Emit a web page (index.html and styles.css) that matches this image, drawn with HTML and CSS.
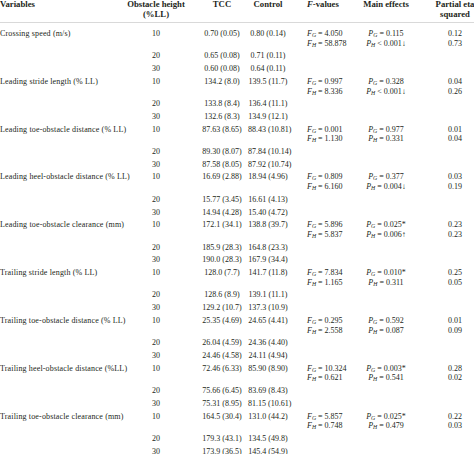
FILE: index.html
```html
<!DOCTYPE html>
<html lang="en">
<head>
<meta charset="utf-8">
<title>Table</title>
<link rel="stylesheet" href="styles.css">
</head>
<body>
<table class="data">
<colgroup>
<col class="c-var"><col class="c-obs"><col class="c-tcc"><col class="c-ctl"><col class="c-f"><col class="c-main"><col class="c-eta">
</colgroup>
<thead>
<tr>
<th class="var">Variables</th>
<th class="obs">Obstacle height<br>(%LL)</th>
<th class="tcc">TCC</th>
<th class="ctl">Control</th>
<th class="fv"><i>F</i>-values</th>
<th class="main">Main effects</th>
<th class="eta">Partial eta<br>squared</th>
</tr>
</thead>
<tbody>
<tr class="first"><td class="var">Crossing speed (m/s)</td><td class="obs">10</td><td class="tcc">0.70 (0.05)</td><td class="ctl">0.80 (0.14)</td><td class="fv"><i>F<sub>G</sub></i> = 4.050<br><i>F<sub>H</sub></i> = 58.878</td><td class="main"><i>P<sub>G</sub></i> = 0.115<br><i>P<sub>H</sub></i> &lt; 0.001↓</td><td class="eta">0.12<br>0.73</td></tr>
<tr><td class="var"></td><td class="obs">20</td><td class="tcc">0.65 (0.08)</td><td class="ctl">0.71 (0.11)</td><td></td><td></td><td></td></tr>
<tr><td class="var"></td><td class="obs">30</td><td class="tcc">0.60 (0.08)</td><td class="ctl">0.64 (0.11)</td><td></td><td></td><td></td></tr>

<tr><td class="var">Leading stride length (% LL)</td><td class="obs">10</td><td class="tcc">134.2 (8.0)</td><td class="ctl">139.5 (11.7)</td><td class="fv"><i>F<sub>G</sub></i> = 0.997<br><i>F<sub>H</sub></i> = 8.336</td><td class="main"><i>P<sub>G</sub></i> = 0.328<br><i>P<sub>H</sub></i> &lt; 0.001↓</td><td class="eta">0.04<br>0.26</td></tr>
<tr><td class="var"></td><td class="obs">20</td><td class="tcc">133.8 (8.4)</td><td class="ctl">136.4 (11.1)</td><td></td><td></td><td></td></tr>
<tr><td class="var"></td><td class="obs">30</td><td class="tcc">132.6 (8.3)</td><td class="ctl">134.9 (12.1)</td><td></td><td></td><td></td></tr>

<tr><td class="var">Leading toe-obstacle distance (% LL)</td><td class="obs">10</td><td class="tcc">87.63 (8.65)</td><td class="ctl">88.43 (10.81)</td><td class="fv"><i>F<sub>G</sub></i> = 0.001<br><i>F<sub>H</sub></i> = 1.130</td><td class="main"><i>P<sub>G</sub></i> = 0.977<br><i>P<sub>H</sub></i> = 0.331</td><td class="eta">0.01<br>0.04</td></tr>
<tr><td class="var"></td><td class="obs">20</td><td class="tcc">89.30 (8.07)</td><td class="ctl">87.84 (10.14)</td><td></td><td></td><td></td></tr>
<tr><td class="var"></td><td class="obs">30</td><td class="tcc">87.58 (8.05)</td><td class="ctl">87.92 (10.74)</td><td></td><td></td><td></td></tr>

<tr><td class="var">Leading heel-obstacle distance (% LL)</td><td class="obs">10</td><td class="tcc">16.69 (2.88)</td><td class="ctl">18.94 (4.96)</td><td class="fv"><i>F<sub>G</sub></i> = 0.809<br><i>F<sub>H</sub></i> = 6.160</td><td class="main"><i>P<sub>G</sub></i> = 0.377<br><i>P<sub>H</sub></i> = 0.004↓</td><td class="eta">0.03<br>0.19</td></tr>
<tr><td class="var"></td><td class="obs">20</td><td class="tcc">15.77 (3.45)</td><td class="ctl">16.61 (4.13)</td><td></td><td></td><td></td></tr>
<tr><td class="var"></td><td class="obs">30</td><td class="tcc">14.94 (4.28)</td><td class="ctl">15.40 (4.72)</td><td></td><td></td><td></td></tr>

<tr><td class="var">Leading toe-obstacle clearance (mm)</td><td class="obs">10</td><td class="tcc">172.1 (34.1)</td><td class="ctl">138.8 (39.7)</td><td class="fv"><i>F<sub>G</sub></i> = 5.896<br><i>F<sub>H</sub></i> = 5.837</td><td class="main"><i>P<sub>G</sub></i> = 0.025*<br><i>P<sub>H</sub></i> = 0.006↑</td><td class="eta">0.23<br>0.23</td></tr>
<tr><td class="var"></td><td class="obs">20</td><td class="tcc">185.9 (28.3)</td><td class="ctl">164.8 (23.3)</td><td></td><td></td><td></td></tr>
<tr><td class="var"></td><td class="obs">30</td><td class="tcc">190.0 (28.3)</td><td class="ctl">167.9 (34.4)</td><td></td><td></td><td></td></tr>

<tr><td class="var">Trailing stride length (% LL)</td><td class="obs">10</td><td class="tcc">128.0 (7.7)</td><td class="ctl">141.7 (11.8)</td><td class="fv"><i>F<sub>G</sub></i> = 7.834<br><i>F<sub>H</sub></i> = 1.165</td><td class="main"><i>P<sub>G</sub></i> = 0.010*<br><i>P<sub>H</sub></i> = 0.311</td><td class="eta">0.25<br>0.05</td></tr>
<tr><td class="var"></td><td class="obs">20</td><td class="tcc">128.6 (8.9)</td><td class="ctl">139.1 (11.1)</td><td></td><td></td><td></td></tr>
<tr><td class="var"></td><td class="obs">30</td><td class="tcc">129.2 (10.7)</td><td class="ctl">137.3 (10.9)</td><td></td><td></td><td></td></tr>

<tr><td class="var">Trailing toe-obstacle distance (% LL)</td><td class="obs">10</td><td class="tcc">25.35 (4.69)</td><td class="ctl">24.65 (4.41)</td><td class="fv"><i>F<sub>G</sub></i> = 0.295<br><i>F<sub>H</sub></i> = 2.558</td><td class="main"><i>P<sub>G</sub></i> = 0.592<br><i>P<sub>H</sub></i> = 0.087</td><td class="eta">0.01<br>0.09</td></tr>
<tr><td class="var"></td><td class="obs">20</td><td class="tcc">26.04 (4.59)</td><td class="ctl">24.36 (4.40)</td><td></td><td></td><td></td></tr>
<tr><td class="var"></td><td class="obs">30</td><td class="tcc">24.46 (4.58)</td><td class="ctl">24.11 (4.94)</td><td></td><td></td><td></td></tr>

<tr><td class="var">Trailing heel-obstacle distance (%LL)</td><td class="obs">10</td><td class="tcc">72.46 (6.33)</td><td class="ctl">85.90 (8.90)</td><td class="fv"><i>F<sub>G</sub></i> = 10.324<br><i>F<sub>H</sub></i> = 0.621</td><td class="main"><i>P<sub>G</sub></i> = 0.003*<br><i>P<sub>H</sub></i> = 0.541</td><td class="eta">0.28<br>0.02</td></tr>
<tr><td class="var"></td><td class="obs">20</td><td class="tcc">75.66 (6.45)</td><td class="ctl">83.69 (8.43)</td><td></td><td></td><td></td></tr>
<tr><td class="var"></td><td class="obs">30</td><td class="tcc">75.31 (8.95)</td><td class="ctl">81.15 (10.61)</td><td></td><td></td><td></td></tr>

<tr><td class="var">Trailing toe-obstacle clearance (mm)</td><td class="obs">10</td><td class="tcc">164.5 (30.4)</td><td class="ctl">131.0 (44.2)</td><td class="fv"><i>F<sub>G</sub></i> = 5.857<br><i>F<sub>H</sub></i> = 0.748</td><td class="main"><i>P<sub>G</sub></i> = 0.025*<br><i>P<sub>H</sub></i> = 0.479</td><td class="eta">0.22<br>0.03</td></tr>
<tr><td class="var"></td><td class="obs">20</td><td class="tcc">179.3 (43.1)</td><td class="ctl">134.5 (49.8)</td><td></td><td></td><td></td></tr>
<tr><td class="var"></td><td class="obs">30</td><td class="tcc">173.9 (36.5)</td><td class="ctl">145.4 (54.9)</td><td></td><td></td><td></td></tr>
</tbody>
</table>
</body>
</html>
```
FILE: styles.css
```css
html, body {
  margin: 0;
  padding: 0;
  background: #ffffff;
  overflow: hidden;
  width: 474px;
  height: 454px;
}
body {
  font-family: "Liberation Serif", "Times New Roman", serif;
  color: #231f20;
}
.data {
  border-collapse: collapse;
  table-layout: fixed;
  width: 490px;
}
.c-var { width: 124px; }
.c-obs { width: 64px; }
.c-tcc { width: 60px; }
.c-ctl { width: 52px; }
.c-f { width: 52px; }
.c-main { width: 68px; }
.c-eta { width: 70px; }

.data th {
  font-size: 8.7px;
  line-height: 9.5px;
  font-weight: bold;
  padding: 0 0 3px 0;
  vertical-align: top;
  text-align: center;
  white-space: nowrap;
  border-bottom: 1px solid #d9d9d9;
}
.data td {
  font-size: 8px;
  line-height: 9.7px;
  padding: 1.5px 0;
  vertical-align: top;
  text-align: center;
  white-space: nowrap;
}
.data tr.first td { padding-top: 6px; }

.data .var { text-align: left; padding-left: 0; }
.data td.var { letter-spacing: 0.15px; }
.data .tcc { padding-left: 8px; }
.data .ctl { padding-right: 12px; }
.data .fv { text-align: left; padding-left: 7px; }

.data sub {
  font-size: 72%;
  line-height: 0;
  vertical-align: -0.25em;
}
.data i { font-style: italic; }
```
